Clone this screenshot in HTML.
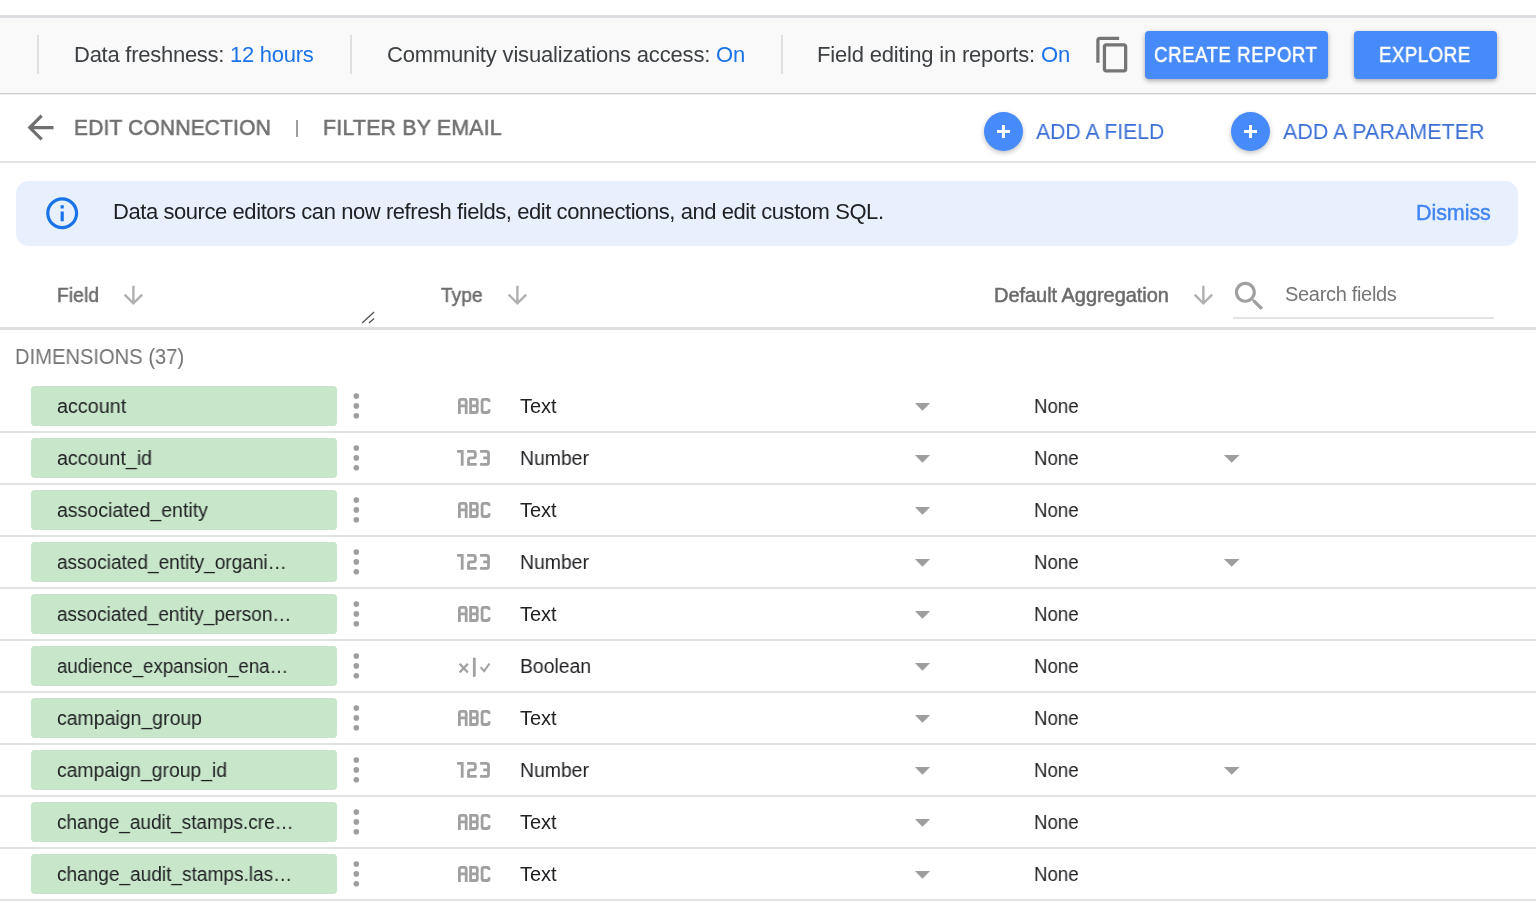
<!DOCTYPE html>
<html><head><meta charset="utf-8"><title>Data source editor</title><style>*{margin:0;padding:0;box-sizing:border-box}
html,body{width:1536px;height:903px;overflow:hidden;background:#fff;font-family:"Liberation Sans",sans-serif}
.a{position:absolute}
.t{position:absolute;white-space:nowrap;line-height:30px;height:30px;will-change:transform}
.ic{position:absolute;overflow:visible}
.toolbar{position:absolute;left:0;top:15px;width:1536px;height:80px;background:#f9f9f9;border-top:3px solid #dcdde0}
.toolbar:after{content:"";position:absolute;left:0;top:75px;width:100%;height:1px;background:#cdcdcd;box-shadow:0 1px 0 #efefef}
.vsep{position:absolute;top:17px;width:2px;height:39px;background:#e0e0e0}
.btn{position:absolute;top:31px;height:48px;border-radius:4px;background:#478afa;box-shadow:0 2px 4px rgba(0,0,0,.24),0 1px 6px rgba(0,0,0,.10)}
.fab{position:absolute;top:111.6px;width:39px;height:39px;border-radius:50%;background:#478afa;box-shadow:0 2px 5px rgba(0,0,0,.24)}
.fab:before{content:"";position:absolute;left:13px;top:18.4px;width:13px;height:2.8px;background:#fff}
.fab:after{content:"";position:absolute;left:18.1px;top:13.3px;width:2.8px;height:13px;background:#fff}
.hline{position:absolute;left:0;width:1536px}
.banner{position:absolute;left:16px;top:181px;width:1502px;height:65px;border-radius:12.5px;background:#e8f0fe}
.row{position:absolute;left:0;width:1536px;height:52px}
.pill{position:absolute;left:31px;top:7px;width:306px;height:39.5px;border-radius:4px;background:#c8e6c9}
.dots{position:absolute;left:350px;top:10px;overflow:visible}
.typ{left:456px;top:17px}
.tri{position:absolute;top:20px;overflow:visible}
.t1{left:910px}.t2{left:1219px}
.sep{position:absolute;left:0;top:52px;width:1536px;height:2px;background:#e2e2e2}
</style></head><body>
<div class="toolbar">
<div class="vsep" style="left:37px"></div><div class="vsep" style="left:350px"></div><div class="vsep" style="left:781px"></div>
</div>
<svg class="ic" style="left:1092.6px;top:35.1px" width="39.2" height="39.2" viewBox="0 0 24 24"><path fill="#757575" d="M16 1H4c-1.1 0-2 .9-2 2v14h2V3h12V1zm3 4H8c-1.1 0-2 .9-2 2v14c0 1.1.9 2 2 2h11c1.1 0 2-.9 2-2V7c0-1.1-.9-2-2-2zm0 16H8V7h11v14z"/></svg>
<div class="btn" style="left:1145px;width:183px"></div>
<div class="btn" style="left:1354px;width:143px"></div>
<svg class="ic" style="left:21.3px;top:107.9px" width="39" height="39" viewBox="0 0 24 24"><path fill="#707070" d="M20 11H7.83l5.59-5.59L12 4l-8 8 8 8 1.41-1.41L7.83 13H20v-2z"/></svg>
<div class="a" style="left:296px;top:120px;width:2px;height:17px;background:#a0a0a0"></div>
<div class="fab" style="left:983.7px"></div>
<div class="fab" style="left:1230.8px"></div>
<div class="hline" style="top:161px;height:2px;background:#e2e2e2"></div>
<div class="banner"></div>
<svg class="ic" style="left:42.6px;top:193.9px" width="38.4" height="38.4" viewBox="0 0 24 24"><path fill="#1a73e8" d="M11 7h2v2h-2zm0 4h2v6h-2zm1-9C6.480 2 2 6.48 2 12s4.48 10 10 10 10-4.48 10-10S17.52 2 12 2zm0 18c-4.41 0-8-3.59-8-8s3.59-8 8-8 8 3.59 8 8-3.59 8-8 8z"/></svg>
<svg class="ic" style="left:118.95px;top:280.6px" width="28.8" height="28.8" viewBox="0 0 24 24"><path fill="#b0b0b0" d="M20 12l-1.41-1.41L13 16.17V4h-2v12.17l-5.58-5.59L4 12l8 8 8-8z"/></svg>
<svg class="ic" style="left:503px;top:280.6px" width="28.8" height="28.8" viewBox="0 0 24 24"><path fill="#b0b0b0" d="M20 12l-1.41-1.41L13 16.17V4h-2v12.17l-5.58-5.59L4 12l8 8 8-8z"/></svg>
<svg class="ic" style="left:1188.75px;top:280.6px" width="28.8" height="28.8" viewBox="0 0 24 24"><path fill="#b0b0b0" d="M20 12l-1.41-1.41L13 16.17V4h-2v12.17l-5.58-5.59L4 12l8 8 8-8z"/></svg>
<svg class="ic" style="left:355px;top:305px" width="25" height="25" viewBox="355 305 25 25"><path d="M362.1 323.1L374.1 311.9M368.9 323.1L374.1 318.6" stroke="#505050" stroke-width="1.3" fill="none"/></svg>
<svg class="ic" style="left:1230px;top:276.8px" width="38.8" height="38.8" viewBox="0 0 24 24"><path fill="#a0a0a0" d="M15.5 14h-.79l-.28-.27C15.410 12.59 16 11.11 16 9.5 16 5.91 13.09 3 9.5 3S3 5.91 3 9.5 5.91 16 9.5 16c1.61 0 3.09-.59 4.23-1.57l.27.28v.79l5 4.99L20.49 19l-4.99-5zm-6 0C7.01 14 5 11.99 5 9.5S7.01 5 9.5 5 14 7.01 14 9.5 11.99 14 9.5 14z"/></svg>
<div class="a" style="left:1233px;top:317px;width:261px;height:2px;background:#e4e4e4"></div>
<div class="hline" style="top:327px;height:3px;background:#dfdfdf"></div>

<div class="row" style="top:379px">
<div class="pill"></div><svg class="dots" width="12" height="34" viewBox="350 389 12 34"><g fill="#9e9e9e"><circle cx="356.3" cy="396.1" r="2.8"/><circle cx="356.3" cy="405.9" r="2.8"/><circle cx="356.3" cy="415.7" r="2.8"/></g></svg>
<svg class="ic typ" width="36" height="22" viewBox="0 0 36 22"><g fill="none" stroke="#a0a0a0" stroke-width="2.8"><path d="M3.4 17.9V5.2Q3.4 3.4 5.2 3.4H8.4Q10.2 3.4 10.2 5.2V17.9M3.4 9.95H10.2M14.6 17.9V3.4H19.5Q21.3 3.4 21.3 5.2V8Q21.3 9.8 19.5 9.8H14.6M19.5 9.8Q21.3 9.8 21.3 11.6V14.7Q21.3 16.5 19.5 16.5H14.6M33 6V5.2Q33 3.4 31.2 3.4H27.9Q26.1 3.4 26.1 5.2V14.7Q26.1 16.5 27.9 16.5H31.2Q33 16.5 33 14.7V13.3"/></g></svg>
<svg class="tri t1" width="25" height="14" viewBox="910 399 25 14"><path fill="#9e9e9e" d="M914.9 403.1H930.1L922.5 410.7z"/></svg>
<div class="sep"></div></div>
<div class="row" style="top:431px">
<div class="pill"></div><svg class="dots" width="12" height="34" viewBox="350 389 12 34"><g fill="#9e9e9e"><circle cx="356.3" cy="396.1" r="2.8"/><circle cx="356.3" cy="405.9" r="2.8"/><circle cx="356.3" cy="415.7" r="2.8"/></g></svg>
<svg class="ic typ" width="36" height="22" viewBox="0 0 36 22"><g fill="none" stroke="#a0a0a0" stroke-width="2.8"><path d="M1.1 3.45H6.2V17.8M11.1 3.45H17.3Q19.3 3.45 19.3 5.45V7.85Q19.3 9.85 17.3 9.85H14.5Q12.5 9.85 12.5 11.85V16.45H20.7M24.1 3.45H30.5Q32.5 3.45 32.5 5.45V14.45Q32.5 16.45 30.5 16.45H24.1M27.2 9.85H32.5"/></g></svg>
<svg class="tri t1" width="25" height="14" viewBox="910 399 25 14"><path fill="#9e9e9e" d="M914.9 403.1H930.1L922.5 410.7z"/></svg><svg class="tri t2" width="25" height="14" viewBox="1219 399 25 14"><path fill="#9e9e9e" d="M1223.9 402.9H1239.5L1231.7 410.7z"/></svg>
<div class="sep"></div></div>
<div class="row" style="top:483px">
<div class="pill"></div><svg class="dots" width="12" height="34" viewBox="350 389 12 34"><g fill="#9e9e9e"><circle cx="356.3" cy="396.1" r="2.8"/><circle cx="356.3" cy="405.9" r="2.8"/><circle cx="356.3" cy="415.7" r="2.8"/></g></svg>
<svg class="ic typ" width="36" height="22" viewBox="0 0 36 22"><g fill="none" stroke="#a0a0a0" stroke-width="2.8"><path d="M3.4 17.9V5.2Q3.4 3.4 5.2 3.4H8.4Q10.2 3.4 10.2 5.2V17.9M3.4 9.95H10.2M14.6 17.9V3.4H19.5Q21.3 3.4 21.3 5.2V8Q21.3 9.8 19.5 9.8H14.6M19.5 9.8Q21.3 9.8 21.3 11.6V14.7Q21.3 16.5 19.5 16.5H14.6M33 6V5.2Q33 3.4 31.2 3.4H27.9Q26.1 3.4 26.1 5.2V14.7Q26.1 16.5 27.9 16.5H31.2Q33 16.5 33 14.7V13.3"/></g></svg>
<svg class="tri t1" width="25" height="14" viewBox="910 399 25 14"><path fill="#9e9e9e" d="M914.9 403.1H930.1L922.5 410.7z"/></svg>
<div class="sep"></div></div>
<div class="row" style="top:535px">
<div class="pill"></div><svg class="dots" width="12" height="34" viewBox="350 389 12 34"><g fill="#9e9e9e"><circle cx="356.3" cy="396.1" r="2.8"/><circle cx="356.3" cy="405.9" r="2.8"/><circle cx="356.3" cy="415.7" r="2.8"/></g></svg>
<svg class="ic typ" width="36" height="22" viewBox="0 0 36 22"><g fill="none" stroke="#a0a0a0" stroke-width="2.8"><path d="M1.1 3.45H6.2V17.8M11.1 3.45H17.3Q19.3 3.45 19.3 5.45V7.85Q19.3 9.85 17.3 9.85H14.5Q12.5 9.85 12.5 11.85V16.45H20.7M24.1 3.45H30.5Q32.5 3.45 32.5 5.45V14.45Q32.5 16.45 30.5 16.45H24.1M27.2 9.85H32.5"/></g></svg>
<svg class="tri t1" width="25" height="14" viewBox="910 399 25 14"><path fill="#9e9e9e" d="M914.9 403.1H930.1L922.5 410.7z"/></svg><svg class="tri t2" width="25" height="14" viewBox="1219 399 25 14"><path fill="#9e9e9e" d="M1223.9 402.9H1239.5L1231.7 410.7z"/></svg>
<div class="sep"></div></div>
<div class="row" style="top:587px">
<div class="pill"></div><svg class="dots" width="12" height="34" viewBox="350 389 12 34"><g fill="#9e9e9e"><circle cx="356.3" cy="396.1" r="2.8"/><circle cx="356.3" cy="405.9" r="2.8"/><circle cx="356.3" cy="415.7" r="2.8"/></g></svg>
<svg class="ic typ" width="36" height="22" viewBox="0 0 36 22"><g fill="none" stroke="#a0a0a0" stroke-width="2.8"><path d="M3.4 17.9V5.2Q3.4 3.4 5.2 3.4H8.4Q10.2 3.4 10.2 5.2V17.9M3.4 9.95H10.2M14.6 17.9V3.4H19.5Q21.3 3.4 21.3 5.2V8Q21.3 9.8 19.5 9.8H14.6M19.5 9.8Q21.3 9.8 21.3 11.6V14.7Q21.3 16.5 19.5 16.5H14.6M33 6V5.2Q33 3.4 31.2 3.4H27.9Q26.1 3.4 26.1 5.2V14.7Q26.1 16.5 27.9 16.5H31.2Q33 16.5 33 14.7V13.3"/></g></svg>
<svg class="tri t1" width="25" height="14" viewBox="910 399 25 14"><path fill="#9e9e9e" d="M914.9 403.1H930.1L922.5 410.7z"/></svg>
<div class="sep"></div></div>
<div class="row" style="top:639px">
<div class="pill"></div><svg class="dots" width="12" height="34" viewBox="350 389 12 34"><g fill="#9e9e9e"><circle cx="356.3" cy="396.1" r="2.8"/><circle cx="356.3" cy="405.9" r="2.8"/><circle cx="356.3" cy="415.7" r="2.8"/></g></svg>
<svg class="ic typ" width="36" height="22" viewBox="0 0 36 22"><g fill="none" stroke="#a0a0a0" stroke-width="2.8"><path stroke-width="2.3" d="M3.6 7.8L11.9 16.5M11.9 7.8L3.6 16.5"/><path stroke="none" fill="#a0a0a0" d="M16.9 1.7h2.8v19.1h-2.8z"/><path stroke-width="2.1" d="M24.6 11.1L28.2 15.1L33.5 7.5"/></g></svg>
<svg class="tri t1" width="25" height="14" viewBox="910 399 25 14"><path fill="#9e9e9e" d="M914.9 403.1H930.1L922.5 410.7z"/></svg>
<div class="sep"></div></div>
<div class="row" style="top:691px">
<div class="pill"></div><svg class="dots" width="12" height="34" viewBox="350 389 12 34"><g fill="#9e9e9e"><circle cx="356.3" cy="396.1" r="2.8"/><circle cx="356.3" cy="405.9" r="2.8"/><circle cx="356.3" cy="415.7" r="2.8"/></g></svg>
<svg class="ic typ" width="36" height="22" viewBox="0 0 36 22"><g fill="none" stroke="#a0a0a0" stroke-width="2.8"><path d="M3.4 17.9V5.2Q3.4 3.4 5.2 3.4H8.4Q10.2 3.4 10.2 5.2V17.9M3.4 9.95H10.2M14.6 17.9V3.4H19.5Q21.3 3.4 21.3 5.2V8Q21.3 9.8 19.5 9.8H14.6M19.5 9.8Q21.3 9.8 21.3 11.6V14.7Q21.3 16.5 19.5 16.5H14.6M33 6V5.2Q33 3.4 31.2 3.4H27.9Q26.1 3.4 26.1 5.2V14.7Q26.1 16.5 27.9 16.5H31.2Q33 16.5 33 14.7V13.3"/></g></svg>
<svg class="tri t1" width="25" height="14" viewBox="910 399 25 14"><path fill="#9e9e9e" d="M914.9 403.1H930.1L922.5 410.7z"/></svg>
<div class="sep"></div></div>
<div class="row" style="top:743px">
<div class="pill"></div><svg class="dots" width="12" height="34" viewBox="350 389 12 34"><g fill="#9e9e9e"><circle cx="356.3" cy="396.1" r="2.8"/><circle cx="356.3" cy="405.9" r="2.8"/><circle cx="356.3" cy="415.7" r="2.8"/></g></svg>
<svg class="ic typ" width="36" height="22" viewBox="0 0 36 22"><g fill="none" stroke="#a0a0a0" stroke-width="2.8"><path d="M1.1 3.45H6.2V17.8M11.1 3.45H17.3Q19.3 3.45 19.3 5.45V7.85Q19.3 9.85 17.3 9.85H14.5Q12.5 9.85 12.5 11.85V16.45H20.7M24.1 3.45H30.5Q32.5 3.45 32.5 5.45V14.45Q32.5 16.45 30.5 16.45H24.1M27.2 9.85H32.5"/></g></svg>
<svg class="tri t1" width="25" height="14" viewBox="910 399 25 14"><path fill="#9e9e9e" d="M914.9 403.1H930.1L922.5 410.7z"/></svg><svg class="tri t2" width="25" height="14" viewBox="1219 399 25 14"><path fill="#9e9e9e" d="M1223.9 402.9H1239.5L1231.7 410.7z"/></svg>
<div class="sep"></div></div>
<div class="row" style="top:795px">
<div class="pill"></div><svg class="dots" width="12" height="34" viewBox="350 389 12 34"><g fill="#9e9e9e"><circle cx="356.3" cy="396.1" r="2.8"/><circle cx="356.3" cy="405.9" r="2.8"/><circle cx="356.3" cy="415.7" r="2.8"/></g></svg>
<svg class="ic typ" width="36" height="22" viewBox="0 0 36 22"><g fill="none" stroke="#a0a0a0" stroke-width="2.8"><path d="M3.4 17.9V5.2Q3.4 3.4 5.2 3.4H8.4Q10.2 3.4 10.2 5.2V17.9M3.4 9.95H10.2M14.6 17.9V3.4H19.5Q21.3 3.4 21.3 5.2V8Q21.3 9.8 19.5 9.8H14.6M19.5 9.8Q21.3 9.8 21.3 11.6V14.7Q21.3 16.5 19.5 16.5H14.6M33 6V5.2Q33 3.4 31.2 3.4H27.9Q26.1 3.4 26.1 5.2V14.7Q26.1 16.5 27.9 16.5H31.2Q33 16.5 33 14.7V13.3"/></g></svg>
<svg class="tri t1" width="25" height="14" viewBox="910 399 25 14"><path fill="#9e9e9e" d="M914.9 403.1H930.1L922.5 410.7z"/></svg>
<div class="sep"></div></div>
<div class="row" style="top:847px">
<div class="pill"></div><svg class="dots" width="12" height="34" viewBox="350 389 12 34"><g fill="#9e9e9e"><circle cx="356.3" cy="396.1" r="2.8"/><circle cx="356.3" cy="405.9" r="2.8"/><circle cx="356.3" cy="415.7" r="2.8"/></g></svg>
<svg class="ic typ" width="36" height="22" viewBox="0 0 36 22"><g fill="none" stroke="#a0a0a0" stroke-width="2.8"><path d="M3.4 17.9V5.2Q3.4 3.4 5.2 3.4H8.4Q10.2 3.4 10.2 5.2V17.9M3.4 9.95H10.2M14.6 17.9V3.4H19.5Q21.3 3.4 21.3 5.2V8Q21.3 9.8 19.5 9.8H14.6M19.5 9.8Q21.3 9.8 21.3 11.6V14.7Q21.3 16.5 19.5 16.5H14.6M33 6V5.2Q33 3.4 31.2 3.4H27.9Q26.1 3.4 26.1 5.2V14.7Q26.1 16.5 27.9 16.5H31.2Q33 16.5 33 14.7V13.3"/></g></svg>
<svg class="tri t1" width="25" height="14" viewBox="910 399 25 14"><path fill="#9e9e9e" d="M914.9 403.1H930.1L922.5 410.7z"/></svg>
<div class="sep"></div></div>
<div class="t" style="left:74.13px;top:40.28px;font-size:22px;letter-spacing:-0.259px;color:#3c4043">Data freshness: <span style="color:#1a73e8">12 hours</span></div>
<div class="t" style="left:386.97px;top:40.28px;font-size:22px;letter-spacing:-0.180px;color:#3c4043">Community visualizations access: <span style="color:#1a73e8">On</span></div>
<div class="t" style="left:817.1px;top:40.28px;font-size:22px;letter-spacing:-0.181px;color:#3c4043">Field editing in reports: <span style="color:#1a73e8">On</span></div>
<div class="t" style="left:1153.76px;top:40.32px;font-size:21.6px;-webkit-text-stroke:0.55px currentColor;letter-spacing:0.600px;transform:scaleX(0.8630);transform-origin:0 0;color:#ffffff">CREATE REPORT</div>
<div class="t" style="left:1379.36px;top:40.32px;font-size:21.6px;-webkit-text-stroke:0.55px currentColor;letter-spacing:0.600px;transform:scaleX(0.8632);transform-origin:0 0;color:#ffffff">EXPLORE</div>
<div class="t" style="left:74.07px;top:113.1px;font-size:22.5px;-webkit-text-stroke:0.6px currentColor;letter-spacing:0.200px;transform:scaleX(0.9317);transform-origin:0 0;color:#707070">EDIT CONNECTION</div>
<div class="t" style="left:323.11px;top:112.9px;font-size:22.5px;-webkit-text-stroke:0.6px currentColor;letter-spacing:0.200px;transform:scaleX(0.9490);transform-origin:0 0;color:#707070">FILTER BY EMAIL</div>
<div class="t" style="left:1036.31px;top:117.1px;font-size:22.5px;transform:scaleX(0.9418);transform-origin:0 0;color:#3b6fd6">ADD A FIELD</div>
<div class="t" style="left:1283.03px;top:116.9px;font-size:22.5px;transform:scaleX(0.9552);transform-origin:0 0;color:#3b6fd6">ADD A PARAMETER</div>
<div class="t" style="left:112.97px;top:197.48px;font-size:22px;letter-spacing:-0.430px;color:#202124">Data source editors can now refresh fields, edit connections, and edit custom SQL.</div>
<div class="t" style="left:1416.25px;top:198.15px;font-size:21.5px;-webkit-text-stroke:0.45px currentColor;letter-spacing:-0.070px;color:#4285f4">Dismiss</div>
<div class="t" style="left:57.05px;top:279.97px;font-size:20px;-webkit-text-stroke:0.5px currentColor;letter-spacing:0.200px;transform:scaleX(0.9520);transform-origin:0 0;color:#6b6b6b">Field</div>
<div class="t" style="left:441.36px;top:279.97px;font-size:20px;-webkit-text-stroke:0.5px currentColor;letter-spacing:0.200px;transform:scaleX(0.9469);transform-origin:0 0;color:#6b6b6b">Type</div>
<div class="t" style="left:993.94px;top:279.67px;font-size:20px;-webkit-text-stroke:0.5px currentColor;letter-spacing:-0.041px;color:#6b6b6b">Default Aggregation</div>
<div class="t" style="left:1285.13px;top:279.07px;font-size:20px;letter-spacing:-0.314px;color:#757575">Search fields</div>
<div class="t" style="left:14.78px;top:342.15px;font-size:21.5px;transform:scaleX(0.9376);transform-origin:0 0;color:#737373">DIMENSIONS (37)</div>
<div class="t" style="left:57.22px;top:390.67px;font-size:20px;transform:scaleX(0.9893);transform-origin:0 0;color:#202124">account</div>
<div class="t" style="left:519.58px;top:390.67px;font-size:20px;transform:scaleX(0.9918);transform-origin:0 0;color:#202124">Text</div>
<div class="t" style="left:1033.95px;top:390.67px;font-size:20px;transform:scaleX(0.9322);transform-origin:0 0;color:#202124">None</div>
<div class="t" style="left:57.22px;top:442.67px;font-size:20px;transform:scaleX(0.9832);transform-origin:0 0;color:#202124">account_id</div>
<div class="t" style="left:519.57px;top:442.67px;font-size:20px;transform:scaleX(0.9694);transform-origin:0 0;color:#202124">Number</div>
<div class="t" style="left:1033.95px;top:442.67px;font-size:20px;transform:scaleX(0.9322);transform-origin:0 0;color:#202124">None</div>
<div class="t" style="left:57.22px;top:494.67px;font-size:20px;transform:scaleX(0.9765);transform-origin:0 0;color:#202124">associated_entity</div>
<div class="t" style="left:519.58px;top:494.67px;font-size:20px;transform:scaleX(0.9918);transform-origin:0 0;color:#202124">Text</div>
<div class="t" style="left:1033.95px;top:494.67px;font-size:20px;transform:scaleX(0.9322);transform-origin:0 0;color:#202124">None</div>
<div class="t" style="left:57.22px;top:546.67px;font-size:20px;transform:scaleX(0.9521);transform-origin:0 0;color:#202124">associated_entity_organi…</div>
<div class="t" style="left:519.57px;top:546.67px;font-size:20px;transform:scaleX(0.9694);transform-origin:0 0;color:#202124">Number</div>
<div class="t" style="left:1033.95px;top:546.67px;font-size:20px;transform:scaleX(0.9322);transform-origin:0 0;color:#202124">None</div>
<div class="t" style="left:57.22px;top:598.67px;font-size:20px;transform:scaleX(0.9497);transform-origin:0 0;color:#202124">associated_entity_person…</div>
<div class="t" style="left:519.58px;top:598.67px;font-size:20px;transform:scaleX(0.9918);transform-origin:0 0;color:#202124">Text</div>
<div class="t" style="left:1033.95px;top:598.67px;font-size:20px;transform:scaleX(0.9322);transform-origin:0 0;color:#202124">None</div>
<div class="t" style="left:57.22px;top:650.67px;font-size:20px;transform:scaleX(0.9326);transform-origin:0 0;color:#202124">audience_expansion_ena…</div>
<div class="t" style="left:519.57px;top:650.67px;font-size:20px;transform:scaleX(0.9681);transform-origin:0 0;color:#202124">Boolean</div>
<div class="t" style="left:1033.95px;top:650.67px;font-size:20px;transform:scaleX(0.9322);transform-origin:0 0;color:#202124">None</div>
<div class="t" style="left:57.22px;top:702.67px;font-size:20px;transform:scaleX(0.9734);transform-origin:0 0;color:#202124">campaign_group</div>
<div class="t" style="left:519.58px;top:702.67px;font-size:20px;transform:scaleX(0.9918);transform-origin:0 0;color:#202124">Text</div>
<div class="t" style="left:1033.95px;top:702.67px;font-size:20px;transform:scaleX(0.9322);transform-origin:0 0;color:#202124">None</div>
<div class="t" style="left:57.22px;top:754.67px;font-size:20px;transform:scaleX(0.9682);transform-origin:0 0;color:#202124">campaign_group_id</div>
<div class="t" style="left:519.57px;top:754.67px;font-size:20px;transform:scaleX(0.9694);transform-origin:0 0;color:#202124">Number</div>
<div class="t" style="left:1033.95px;top:754.67px;font-size:20px;transform:scaleX(0.9322);transform-origin:0 0;color:#202124">None</div>
<div class="t" style="left:57.22px;top:806.67px;font-size:20px;transform:scaleX(0.9501);transform-origin:0 0;color:#202124">change_audit_stamps.cre…</div>
<div class="t" style="left:519.58px;top:806.67px;font-size:20px;transform:scaleX(0.9918);transform-origin:0 0;color:#202124">Text</div>
<div class="t" style="left:1033.95px;top:806.67px;font-size:20px;transform:scaleX(0.9322);transform-origin:0 0;color:#202124">None</div>
<div class="t" style="left:57.22px;top:858.67px;font-size:20px;transform:scaleX(0.9530);transform-origin:0 0;color:#202124">change_audit_stamps.las…</div>
<div class="t" style="left:519.58px;top:858.67px;font-size:20px;transform:scaleX(0.9918);transform-origin:0 0;color:#202124">Text</div>
<div class="t" style="left:1033.95px;top:858.67px;font-size:20px;transform:scaleX(0.9322);transform-origin:0 0;color:#202124">None</div>
</body></html>
